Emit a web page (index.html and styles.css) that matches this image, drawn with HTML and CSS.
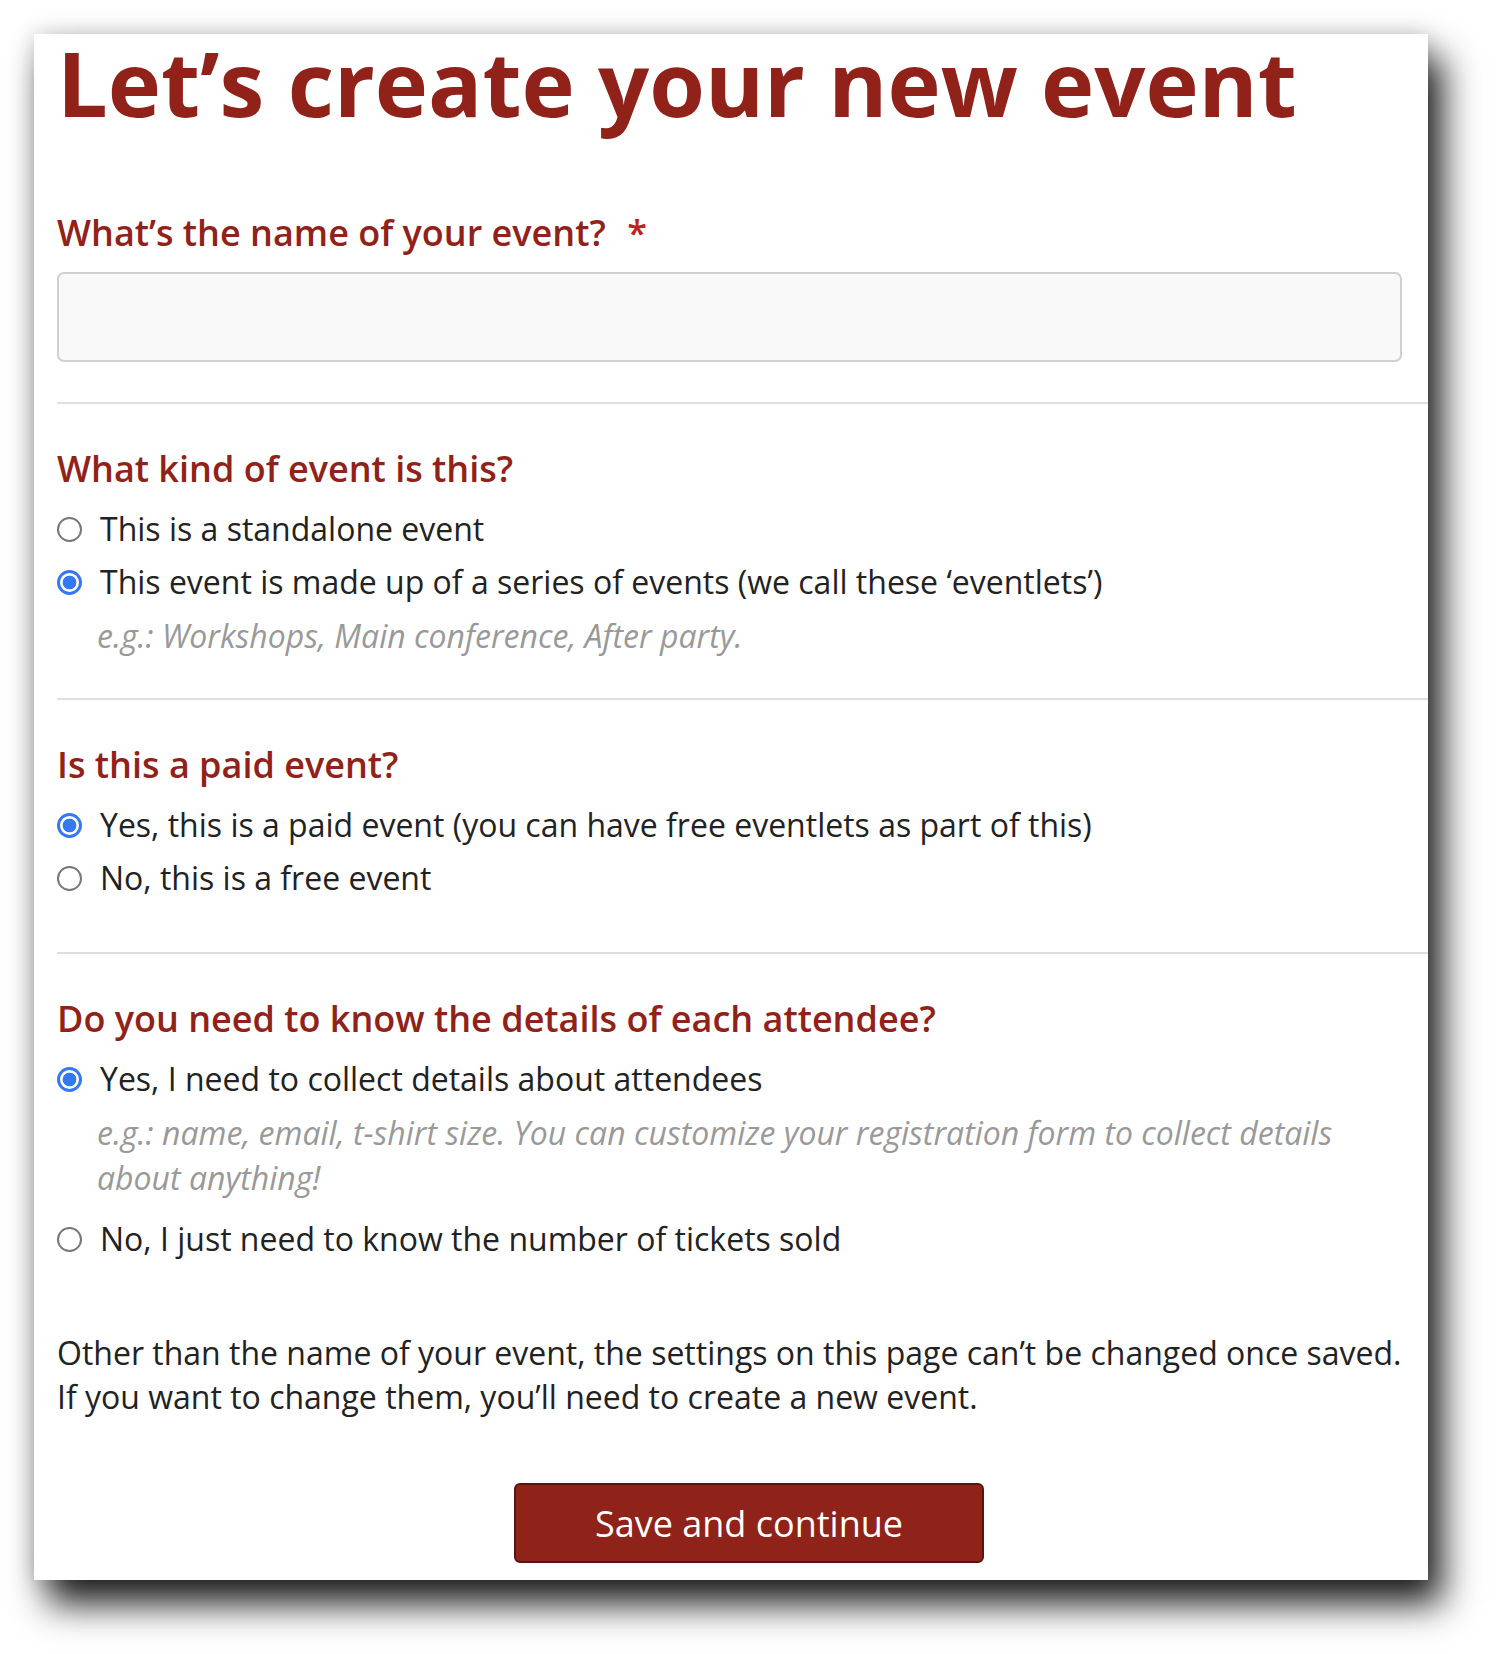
FILE: index.html
```html
<!DOCTYPE html>
<html lang="en">
<head>
    <meta charset="UTF-8">
    <meta name="viewport" content="width=device-width, initial-scale=1.0">
    <title>Create event</title>
    <link rel="stylesheet" href="styles.css">
</head>
<body>
    <div class="window">
        <h1>Let’s create your new event</h1>

        <form class="event-form">
            <div class="field">
                <label class="field-label" for="event-name">What’s the name of your event? <span class="required">*</span></label>
                <input class="text-input" type="text" id="event-name">
            </div>

            <hr class="divider">

            <div class="section">
                <h2>What kind of event is this?</h2>
                <label class="option"><input type="radio" name="kind"> This is a standalone event</label>
                <label class="option"><input type="radio" name="kind" checked> This event is made up of a series of events (we call these ‘eventlets’)</label>
                <p class="hint">e.g.: Workshops, Main conference, After party.</p>
            </div>

            <hr class="divider">

            <div class="section">
                <h2>Is this a paid event?</h2>
                <label class="option"><input type="radio" name="paid" checked> Yes, this is a paid event (you can have free eventlets as part of this)</label>
                <label class="option"><input type="radio" name="paid"> No, this is a free event</label>
            </div>

            <hr class="divider divider-low">

            <div class="section">
                <h2>Do you need to know the details of each attendee?</h2>
                <label class="option"><input type="radio" name="details" checked> Yes, I need to collect details about attendees</label>
                <p class="hint hint-wide">e.g.: name, email, t-shirt size. You can customize your registration form to collect details about anything!</p>
                <label class="option"><input type="radio" name="details"> No, I just need to know the number of tickets sold</label>
            </div>

            <p class="note">Other than the name of your event, the settings on this page can’t be changed once saved.<br>If you want to change them, you’ll need to create a new event.</p>

            <div class="actions">
                <button type="button" class="btn-save">Save and continue</button>
            </div>
        </form>
    </div>
</body>
</html>
```

FILE: styles.css
```css
* {
    margin: 0;
    padding: 0;
    box-sizing: border-box;
}

body {
    font-family: 'Open Sans', 'Noto Sans', sans-serif;
    background: #fff;
    color: #222;
    width: 1502px;
    height: 1654px;
    overflow: hidden;
}

.window {
    margin: 34px 0 0 34px;
    width: 1394px;
    height: 1546px;
    background: #fff;
    padding: 3px 26px 0 23px;
    box-shadow: 14px 24px 34px rgba(0, 0, 0, 0.88), 0 0 22px rgba(0, 0, 0, 0.18);
}

h1 {
    font-size: 90px;
    font-weight: 700;
    line-height: 90px;
    color: #912219;
}

.field {
    margin-top: 82px;
}

.field-label {
    display: block;
    font-size: 36px;
    font-weight: 600;
    line-height: 48px;
    color: #912219;
}

.required {
    color: #c0201a;
    margin-left: 12px;
}

.text-input {
    display: block;
    width: 100%;
    height: 90px;
    margin-top: 15px;
    background: #f9f9f9;
    border: 2px solid #d0d0d0;
    border-radius: 7px;
    font-family: inherit;
    font-size: 32px;
    padding: 0 16px;
}

.divider {
    border: none;
    height: 2px;
    background: #dedede;
    margin: 40px -26px 0 0;
}

.divider-low {
    margin-top: 52px;
}

.section {
    padding-top: 41px;
}

h2 {
    font-size: 36px;
    font-weight: 600;
    line-height: 48px;
    color: #912219;
    margin-bottom: 14px;
}

.option {
    display: flex;
    align-items: center;
    font-size: 32px;
    line-height: 44px;
    color: #222;
    margin-bottom: 9px;
}

.option input {
    appearance: none;
    -webkit-appearance: none;
    width: 25px;
    height: 25px;
    margin-right: 18px;
    border: 2px solid #777;
    border-radius: 50%;
    background: #fff;
    flex-shrink: 0;
}

.option input:checked {
    border: 3px solid #3478f6;
    background: radial-gradient(circle, #3478f6 0 6.5px, #fff 7.2px);
}

.hint {
    font-size: 32px;
    font-style: italic;
    line-height: 45px;
    color: #999;
    padding-left: 40px;
    margin-top: 1px;
}

.hint-wide {
    margin-bottom: 17px;
}

.note {
    font-size: 32px;
    line-height: 44px;
    color: #222;
    margin-top: 70px;
    white-space: nowrap;
}

.actions {
    padding-left: 457px;
    margin-top: 64px;
}

.btn-save {
    width: 470px;
    height: 80px;
    background: #8f2219;
    border: 2px solid #5a1410;
    border-radius: 6px;
    color: #fff;
    font-family: inherit;
    font-size: 36px;
    cursor: pointer;
}
```
